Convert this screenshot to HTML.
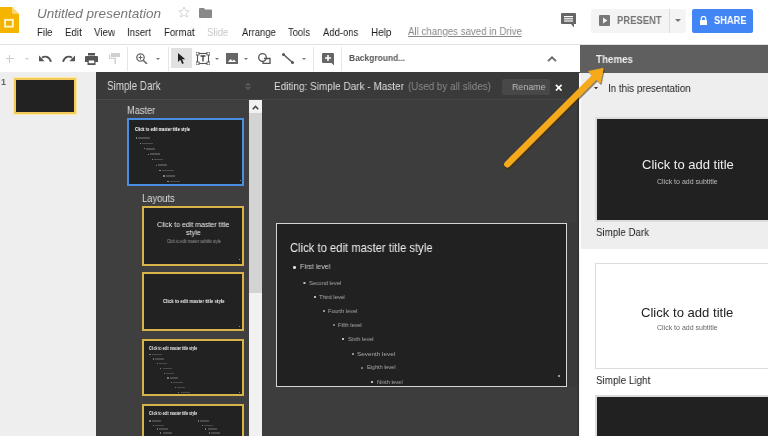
<!DOCTYPE html>
<html><head><meta charset="utf-8">
<style>
*{margin:0;padding:0;box-sizing:border-box}
html,body{width:768px;height:436px;overflow:hidden;background:#fff;font-family:"Liberation Sans",sans-serif;position:relative}
.a{position:absolute}
.t{position:absolute;white-space:nowrap;line-height:1;transform-origin:0 0;will-change:transform}
</style></head><body>
<!-- header -->
<svg class="a" style="left:0;top:6.9px" width="19" height="26.2" viewBox="0 0 19 26.2">
<path d="M0 0H12L19 6.9V25.2Q19 26.2 18 26.2H0Z" fill="#f4b400"/>
<path d="M12 0L19 6.9H14Q12 6.9 12 4.9Z" fill="#fbd77a"/>
<rect x="5.05" y="12.85" width="7.8" height="6.8" fill="#ecb300" stroke="#fdf3cc" stroke-width="1.9"/>
</svg>
<svg class="a" style="left:178.3px;top:5.8px" width="12" height="12" viewBox="0 0 24 24"><path d="M12 2l2.9 7.1 7.6.6-5.8 5 1.8 7.4L12 18l-6.5 4.1 1.8-7.4-5.8-5 7.6-.6z" fill="none" stroke="#ccc" stroke-width="1.6"/></svg>
<svg class="a" style="left:199px;top:8px" width="13" height="10" viewBox="0 0 13 10"><path d="M0 1Q0 0 1 0H5L6 1.5H12Q13 1.5 13 2.5V9Q13 10 12 10H1Q0 10 0 9Z" fill="#888"/></svg>
<svg class="a" style="left:561px;top:13px" width="15" height="15" viewBox="0 0 15 15"><path d="M0 1Q0 0 1 0H14Q15 0 15 1V11H13V14.5L10 11H1Q0 11 0 10Z" fill="#666"/><rect x="3" y="3" width="9" height="1.2" fill="#fff"/><rect x="3" y="5.2" width="9" height="1.2" fill="#fff"/><rect x="3" y="7.4" width="9" height="1.2" fill="#fff"/></svg>
<div class="a" style="left:591px;top:8.5px;width:95px;height:24px;background:#f4f4f4;border-radius:2px"></div>
<div class="a" style="left:669px;top:8.5px;width:1px;height:24px;background:#dcdcdc"></div>
<svg class="a" style="left:599px;top:15px" width="11" height="11" viewBox="0 0 11 11"><rect width="11" height="11" rx="1" fill="#777"/><path d="M4 2.5L8.5 5.5L4 8.5Z" fill="#f1f1f1"/></svg>
<svg class="a" style="left:675px;top:19px" width="6" height="3" viewBox="0 0 6 3"><path d="M0 0H6L3 3Z" fill="#777"/></svg>
<div class="a" style="left:692px;top:8.5px;width:61px;height:24px;background:#4285f4;border-radius:2px"></div>
<svg class="a" style="left:700px;top:16px" width="7" height="9" viewBox="0 0 7 9"><path d="M1.3 4V2.6A2.2 2.2 0 0 1 5.7 2.6V4" fill="none" stroke="#fff" stroke-width="1.2"/><rect x="0" y="4" width="7" height="5" rx=".5" fill="#fff"/></svg>
<div class="a" style="left:0;top:44px;width:768px;height:1px;background:#e2e2e2"></div>
<!-- toolbar -->
<div class="a" style="left:5.5px;top:57.8px;width:8px;height:1.2px;background:#ccc"></div>
<div class="a" style="left:9px;top:54.5px;width:1.2px;height:8px;background:#ccc"></div>
<svg class="a" style="left:24.5px;top:57.5px" width="4" height="2" viewBox="0 0 4 2"><path d="M0 0H4L2 2Z" fill="#ccc"/></svg>
<svg class="a" style="left:38.8px;top:54.8px" width="13" height="7.5" viewBox="0 0 13 7.5"><path d="M3 2.6C6 .8 10.2 1.2 12 6.8" fill="none" stroke="#555" stroke-width="1.9"/><path d="M0 .6V6.2H5.6Z" fill="#555"/></svg>
<svg class="a" style="left:62px;top:54.8px" width="13" height="7.5" viewBox="0 0 13 7.5"><path d="M10 2.6C7 .8 2.8 1.2 1 6.8" fill="none" stroke="#555" stroke-width="1.9"/><path d="M13 .6V6.2H7.4Z" fill="#555"/></svg>
<svg class="a" style="left:84.5px;top:52.5px" width="13" height="12" viewBox="0 0 13 12"><rect x="3" y="0" width="7" height="2.5" fill="#555"/><path d="M0 4Q0 3 1 3H12Q13 3 13 4V9H10.5V12H2.5V9H0Z" fill="#555"/><rect x="3.8" y="7.5" width="5.4" height="2.7" fill="#fff"/></svg>
<svg class="a" style="left:108.5px;top:53px" width="11" height="11" viewBox="0 0 11 11"><rect x="2" y="0" width="9" height="4" fill="#d0d0d0"/><path d="M0 1.5V6H5.5V11H7V4.8H1.2V1.5Z" fill="#d0d0d0"/></svg>
<div class="a" style="left:127px;top:47px;width:1px;height:24px;background:#e6e6e6"></div>
<svg class="a" style="left:136px;top:53px" width="12" height="11" viewBox="0 0 12 11"><circle cx="4.5" cy="4.5" r="3.7" fill="none" stroke="#666" stroke-width="1.3"/><path d="M7.2 7.2L11 11" stroke="#666" stroke-width="1.6"/><path d="M2.6 4.5H6.4M4.5 2.6V6.4" stroke="#666" stroke-width="1.1"/></svg>
<svg class="a" style="left:156px;top:58px" width="4" height="2" viewBox="0 0 4 2"><path d="M0 0H4L2 2Z" fill="#777"/></svg>
<div class="a" style="left:167.5px;top:47px;width:1px;height:24px;background:#e6e6e6"></div>
<div class="a" style="left:170.5px;top:47.7px;width:21.5px;height:20.8px;background:#e1e1e1"></div>
<svg class="a" style="left:178px;top:53px" width="8" height="11" viewBox="0 0 8 11"><path d="M0 0V9L2.3 6.8L4.2 11L5.8 10.3L4 6.3H7.3Z" fill="#222"/></svg>
<svg class="a" style="left:195.5px;top:51.5px" width="14" height="13" viewBox="0 0 14 13"><rect x="1.5" y="1.5" width="11" height="10" fill="none" stroke="#555" stroke-width="1.1"/><rect x="0" y="0" width="3" height="3" fill="#fff" stroke="#555" stroke-width=".9"/><rect x="11" y="0" width="3" height="3" fill="#fff" stroke="#555" stroke-width=".9"/><rect x="0" y="10" width="3" height="3" fill="#fff" stroke="#555" stroke-width=".9"/><rect x="11" y="10" width="3" height="3" fill="#fff" stroke="#555" stroke-width=".9"/><path d="M4.5 4H9.5M7 4V9.5" stroke="#444" stroke-width="1.4"/></svg>
<svg class="a" style="left:214.5px;top:58px" width="4" height="2" viewBox="0 0 4 2"><path d="M0 0H4L2 2Z" fill="#777"/></svg>
<svg class="a" style="left:226px;top:52.5px" width="12" height="11.5" viewBox="0 0 12 11.5"><rect width="12" height="11.5" fill="#666"/><path d="M2 9L4.5 6L6.5 8L8 6.5L10 9Z" fill="#fff"/></svg>
<svg class="a" style="left:243.5px;top:58px" width="4" height="2" viewBox="0 0 4 2"><path d="M0 0H4L2 2Z" fill="#777"/></svg>
<svg class="a" style="left:257.5px;top:53px" width="13" height="11" viewBox="0 0 13 11"><circle cx="4.5" cy="4.5" r="3.8" fill="#fff" stroke="#555" stroke-width="1.3"/><path d="M6 5.5H12V10.5H5V8" fill="none" stroke="#555" stroke-width="1.3"/></svg>
<svg class="a" style="left:282px;top:53px" width="12" height="11" viewBox="0 0 12 11"><path d="M1.5 1.5L10.5 9.5" stroke="#555" stroke-width="1.5"/><circle cx="1.5" cy="1.5" r="1.5" fill="#555"/><circle cx="10.5" cy="9.5" r="1.5" fill="#555"/></svg>
<svg class="a" style="left:302px;top:58px" width="4" height="2" viewBox="0 0 4 2"><path d="M0 0H4L2 2Z" fill="#777"/></svg>
<div class="a" style="left:312.5px;top:47px;width:1px;height:24px;background:#e6e6e6"></div>
<svg class="a" style="left:321.5px;top:52.5px" width="12" height="12.5" viewBox="0 0 12 12.5"><path d="M0 1Q0 0 1 0H11Q12 0 12 1V12.5L9.5 10H1Q0 10 0 9Z" fill="#666"/><path d="M3 5H9M6 2V8" stroke="#fff" stroke-width="1.6"/></svg>
<div class="a" style="left:341px;top:47px;width:1px;height:24px;background:#e6e6e6"></div>
<svg class="a" style="left:547px;top:55.5px" width="10" height="6" viewBox="0 0 10 6"><path d="M1 5.2L5 1.3L9 5.2" fill="none" stroke="#666" stroke-width="1.7"/></svg>
<!-- filmstrip -->
<div class="a" style="left:0;top:72px;width:96px;height:364px;background:#eeeeee"></div>
<div class="a" style="left:14px;top:77.8px;width:62.3px;height:36.7px;background:#222;border:2.4px solid #f2ca55;box-shadow:0 0 0.8px 0.8px #fbe9b0"></div>
<!-- master panel -->
<div class="a" style="left:96px;top:72px;width:166px;height:364px;background:#3f3f3f"></div>
<div class="a" style="left:96px;top:72px;width:166px;height:27px;background:#3a3a3a"></div>
<div class="a" style="left:96px;top:98.5px;width:166px;height:1px;background:#4a4a4a"></div>
<svg class="a" style="left:243.5px;top:82px" width="8" height="8.5" viewBox="0 0 8 8.5"><path d="M.5 3.6L4 .2L7.5 3.6ZM.5 4.9L4 8.3L7.5 4.9Z" fill="#575757"/></svg>
<div class="a" style="left:249px;top:100px;width:13px;height:336px;background:#f1f1f1"></div>
<div class="a" style="left:249px;top:113px;width:13px;height:180px;background:#d3d3d3"></div>
<svg class="a" style="left:252px;top:104.5px" width="7" height="5" viewBox="0 0 7 5"><path d="M.8 4.2L3.5 1.3L6.2 4.2" fill="none" stroke="#444" stroke-width="1.6"/></svg>
<div class="a" style="left:261.5px;top:72px;width:1px;height:364px;background:#363636"></div>
<!-- editing -->
<div class="a" style="left:262px;top:72px;width:318px;height:364px;background:#3d3d3d"></div>
<div class="a" style="left:262px;top:72px;width:318px;height:26.5px;background:#3a3a3a"></div>
<div class="a" style="left:262px;top:98.5px;width:318px;height:1px;background:#474747"></div>
<div class="a" style="left:567px;top:223px;width:12px;height:164px;background:#3a3a3a"></div>
<div class="a" style="left:577px;top:99px;width:2px;height:337px;background:linear-gradient(90deg,#3a3a3a,#2e2e2e)"></div>
<div class="a" style="left:502px;top:79.2px;width:47.6px;height:15.5px;background:#484848;border-radius:2px"></div>
<svg class="a" style="left:555px;top:83.5px" width="7.5" height="7.5" viewBox="0 0 8 8"><path d="M1 1L7 7M7 1L1 7" stroke="#fff" stroke-width="1.8"/></svg>
<div class="a" style="left:275.5px;top:222.5px;width:291.5px;height:164.5px;background:#212121;border:1px solid #d5d5d5"></div>
<!-- themes -->
<div class="a" style="left:580px;top:45px;width:188px;height:27.5px;background:#5f5f5f"></div>
<div class="a" style="left:579px;top:72.5px;width:189px;height:363.5px;background:#fafafa"></div>
<div class="a" style="left:581px;top:72.5px;width:187px;height:176.3px;background:#eeeeee"></div>
<div class="a" style="left:581px;top:248.8px;width:187px;height:187.2px;background:#fff"></div>
<svg class="a" style="left:594px;top:86.5px" width="4" height="2.5" viewBox="0 0 4 2.5"><path d="M0 0H4L2 2.5Z" fill="#333"/></svg>
<div class="a" style="left:594.6px;top:117px;width:190px;height:104.7px;background:#212121;border:2px solid #dcdcdc"></div>
<div class="a" style="left:594.7px;top:263.4px;width:190px;height:105.6px;background:#fff;border:1.5px solid #dcdcdc"></div>
<div class="a" style="left:594.7px;top:394.5px;width:190px;height:60px;background:#212121;border:2px solid #dcdcdc"></div>
<div class="a" style="left:293.3px;top:266.0px;width:2.6px;height:2.6px;border-radius:50%;background:#ddd"></div>
<div class="a" style="left:303.4px;top:281.7px;width:2.2px;height:2.2px;border-radius:50%;border:0.6px solid #bbb"></div>
<div class="a" style="left:313.8px;top:295.9px;width:2.2px;height:2.2px;background:#bbb"></div>
<div class="a" style="left:323.2px;top:310.2px;width:2.2px;height:2.2px;border-radius:50%;background:#bbb"></div>
<div class="a" style="left:332.8px;top:323.9px;width:2.2px;height:2.2px;border-radius:50%;border:0.6px solid #bbb"></div>
<div class="a" style="left:342.2px;top:338.1px;width:2.2px;height:2.2px;background:#bbb"></div>
<div class="a" style="left:351.7px;top:352.8px;width:2.2px;height:2.2px;border-radius:50%;background:#bbb"></div>
<div class="a" style="left:361.2px;top:366.6px;width:2.2px;height:2.2px;border-radius:50%;border:0.6px solid #bbb"></div>
<div class="a" style="left:370.8px;top:380.8px;width:2.2px;height:2.2px;background:#bbb"></div>
<div class="a" style="left:557.5px;top:374.5px;width:2px;height:2px;background:#999"></div>
<div class="a" style="left:127.3px;top:118.3px;width:116.7px;height:67.3px;background:#222;border:2.2px solid #4a8fdf"></div>
<div class="a" style="left:135.7px;top:137.2px;width:1.4px;height:1.4px;background:#888"></div>
<div class="a" style="left:138.4px;top:137.1px;width:12px;height:1.6px;background:#4e4e4e"></div>
<div class="a" style="left:139.7px;top:142.7px;width:1.4px;height:1.4px;background:#888"></div>
<div class="a" style="left:142.3px;top:142.5px;width:11px;height:1.6px;background:#4e4e4e"></div>
<div class="a" style="left:143.6px;top:148.1px;width:1.4px;height:1.4px;background:#888"></div>
<div class="a" style="left:146.3px;top:148.0px;width:9px;height:1.6px;background:#4e4e4e"></div>
<div class="a" style="left:147.6px;top:153.6px;width:1.4px;height:1.4px;background:#888"></div>
<div class="a" style="left:150.2px;top:153.4px;width:10px;height:1.6px;background:#4e4e4e"></div>
<div class="a" style="left:151.5px;top:159.0px;width:1.4px;height:1.4px;background:#888"></div>
<div class="a" style="left:154.2px;top:158.9px;width:9px;height:1.6px;background:#4e4e4e"></div>
<div class="a" style="left:155.5px;top:164.5px;width:1.4px;height:1.4px;background:#888"></div>
<div class="a" style="left:158.2px;top:164.3px;width:9px;height:1.6px;background:#4e4e4e"></div>
<div class="a" style="left:159.4px;top:169.9px;width:1.4px;height:1.4px;background:#888"></div>
<div class="a" style="left:162.1px;top:169.8px;width:12px;height:1.6px;background:#4e4e4e"></div>
<div class="a" style="left:163.4px;top:175.4px;width:1.4px;height:1.4px;background:#888"></div>
<div class="a" style="left:166.1px;top:175.2px;width:9px;height:1.6px;background:#4e4e4e"></div>
<div class="a" style="left:167.3px;top:180.8px;width:1.4px;height:1.4px;background:#888"></div>
<div class="a" style="left:170.0px;top:180.7px;width:10px;height:1.6px;background:#4e4e4e"></div>
<div class="a" style="left:240px;top:180px;width:1px;height:1px;background:#888"></div>
<div class="a" style="left:142.2px;top:205.8px;width:101.8px;height:59.8px;background:#222;border:2.6px solid #d8b34a"></div>
<div class="a" style="left:239px;top:259.3px;width:1px;height:1px;background:#888"></div>
<div class="a" style="left:142.2px;top:272px;width:101.8px;height:58.9px;background:#222;border:2.6px solid #d8b34a"></div>
<div class="a" style="left:239px;top:325.5px;width:1px;height:1px;background:#888"></div>
<div class="a" style="left:142.2px;top:338.5px;width:101.8px;height:57.7px;background:#222;border:2.6px solid #d8b34a"></div>
<div class="a" style="left:239px;top:392.0px;width:1px;height:1px;background:#888"></div>
<div class="a" style="left:142.2px;top:404px;width:101.8px;height:60px;background:#222;border:2.6px solid #d8b34a"></div>
<div class="a" style="left:239px;top:457.5px;width:1px;height:1px;background:#888"></div>
<div class="a" style="left:149.4px;top:353.7px;width:1.2px;height:1.2px;background:#777"></div>
<div class="a" style="left:151.8px;top:353.6px;width:10px;height:1.4px;background:#4a4a4a"></div>
<div class="a" style="left:153.0px;top:358.4px;width:1.2px;height:1.2px;background:#777"></div>
<div class="a" style="left:155.4px;top:358.4px;width:9px;height:1.4px;background:#4a4a4a"></div>
<div class="a" style="left:156.6px;top:363.2px;width:1.2px;height:1.2px;background:#777"></div>
<div class="a" style="left:159.0px;top:363.1px;width:8px;height:1.4px;background:#4a4a4a"></div>
<div class="a" style="left:160.2px;top:367.9px;width:1.2px;height:1.2px;background:#777"></div>
<div class="a" style="left:162.6px;top:367.9px;width:9px;height:1.4px;background:#4a4a4a"></div>
<div class="a" style="left:163.8px;top:372.7px;width:1.2px;height:1.2px;background:#777"></div>
<div class="a" style="left:166.2px;top:372.6px;width:8px;height:1.4px;background:#4a4a4a"></div>
<div class="a" style="left:167.4px;top:377.4px;width:1.2px;height:1.2px;background:#777"></div>
<div class="a" style="left:169.8px;top:377.4px;width:8px;height:1.4px;background:#4a4a4a"></div>
<div class="a" style="left:171.0px;top:382.2px;width:1.2px;height:1.2px;background:#777"></div>
<div class="a" style="left:173.4px;top:382.1px;width:10px;height:1.4px;background:#4a4a4a"></div>
<div class="a" style="left:174.6px;top:386.9px;width:1.2px;height:1.2px;background:#777"></div>
<div class="a" style="left:177.0px;top:386.9px;width:8px;height:1.4px;background:#4a4a4a"></div>
<div class="a" style="left:178.2px;top:391.7px;width:1.2px;height:1.2px;background:#777"></div>
<div class="a" style="left:180.6px;top:391.6px;width:9px;height:1.4px;background:#4a4a4a"></div>
<div class="a" style="left:149.4px;top:420.4px;width:1.2px;height:1.2px;background:#777"></div>
<div class="a" style="left:151.8px;top:420.3px;width:9px;height:1.4px;background:#4a4a4a"></div>
<div class="a" style="left:153.0px;top:424.9px;width:1.2px;height:1.2px;background:#777"></div>
<div class="a" style="left:155.4px;top:424.8px;width:9px;height:1.4px;background:#4a4a4a"></div>
<div class="a" style="left:156.6px;top:428.4px;width:1.2px;height:1.2px;background:#777"></div>
<div class="a" style="left:159.0px;top:428.3px;width:9px;height:1.4px;background:#4a4a4a"></div>
<div class="a" style="left:160.2px;top:432.4px;width:1.2px;height:1.2px;background:#777"></div>
<div class="a" style="left:162.6px;top:432.3px;width:9px;height:1.4px;background:#4a4a4a"></div>
<div class="a" style="left:198.0px;top:420.4px;width:1.2px;height:1.2px;background:#777"></div>
<div class="a" style="left:200.4px;top:420.3px;width:9px;height:1.4px;background:#4a4a4a"></div>
<div class="a" style="left:201.6px;top:424.9px;width:1.2px;height:1.2px;background:#777"></div>
<div class="a" style="left:204.0px;top:424.8px;width:9px;height:1.4px;background:#4a4a4a"></div>
<div class="a" style="left:205.2px;top:428.4px;width:1.2px;height:1.2px;background:#777"></div>
<div class="a" style="left:207.6px;top:428.3px;width:9px;height:1.4px;background:#4a4a4a"></div>
<div class="a" style="left:208.8px;top:432.4px;width:1.2px;height:1.2px;background:#777"></div>
<div class="a" style="left:211.2px;top:432.3px;width:9px;height:1.4px;background:#4a4a4a"></div><div class="t" style="left:37.3px;top:6.70px;font-size:13px;color:#777;font-style:italic;transform:scaleX(1.040);">Untitled presentation</div>
<div class="t" style="left:36.5px;top:26.69px;font-size:11px;color:#222;;transform:scaleX(0.874);">File</div>
<div class="t" style="left:64.6px;top:26.69px;font-size:11px;color:#222;;transform:scaleX(0.880);">Edit</div>
<div class="t" style="left:94.3px;top:26.69px;font-size:11px;color:#222;;transform:scaleX(0.892);">View</div>
<div class="t" style="left:127.1px;top:26.69px;font-size:11px;color:#222;;transform:scaleX(0.872);">Insert</div>
<div class="t" style="left:164.0px;top:26.69px;font-size:11px;color:#222;;transform:scaleX(0.878);">Format</div>
<div class="t" style="left:207.3px;top:26.69px;font-size:11px;color:#c8c8c8;;transform:scaleX(0.870);">Slide</div>
<div class="t" style="left:241.7px;top:26.69px;font-size:11px;color:#222;;transform:scaleX(0.864);">Arrange</div>
<div class="t" style="left:288.0px;top:26.69px;font-size:11px;color:#222;;transform:scaleX(0.856);">Tools</div>
<div class="t" style="left:323.0px;top:26.69px;font-size:11px;color:#222;;transform:scaleX(0.861);">Add-ons</div>
<div class="t" style="left:371.0px;top:26.69px;font-size:11px;color:#222;;transform:scaleX(0.902);">Help</div>
<div class="t" style="left:407.8px;top:26.19px;font-size:11px;color:#888;text-decoration:underline;transform:scaleX(0.879);">All changes saved in Drive</div>
<div class="t" style="left:616.7px;top:15.19px;font-size:11px;color:#757575;font-weight:bold;transform:scaleX(0.858);">PRESENT</div>
<div class="t" style="left:714.0px;top:15.19px;font-size:11px;color:#fff;font-weight:bold;transform:scaleX(0.844);">SHARE</div>
<div class="t" style="left:348.9px;top:53.90px;font-size:8.5px;color:#555;font-weight:bold;transform:scaleX(0.991);">Background...</div>
<div class="t" style="left:595.8px;top:54.11px;font-size:10.5px;color:#eee;font-weight:bold;transform:scaleX(0.932);">Themes</div>
<div class="t" style="left:607.5px;top:82.69px;font-size:11px;color:#222;;transform:scaleX(0.890);">In this presentation</div>
<div class="t" style="left:107.3px;top:79.89px;font-size:12.3px;color:#ddd;;transform:scaleX(0.800);">Simple Dark</div>
<div class="t" style="left:127.2px;top:105.21px;font-size:10.5px;color:#ddd;;transform:scaleX(0.882);">Master</div>
<div class="t" style="left:142.4px;top:193.11px;font-size:10.5px;color:#ddd;;transform:scaleX(0.889);">Layouts</div>
<div class="t" style="left:273.9px;top:81.27px;font-size:11.5px;color:#ddd;;transform:scaleX(0.869);">Editing: Simple Dark - Master</div>
<div class="t" style="left:407.7px;top:81.27px;font-size:11.5px;color:#8a8a8a;;transform:scaleX(0.854);">(Used by all slides)</div>
<div class="t" style="left:511.5px;top:82.46px;font-size:9.5px;color:#bbb;;transform:scaleX(0.933);">Rename</div>
<div class="t" style="left:1.2px;top:78.08px;font-size:9px;color:#666;font-weight:bold;">1</div>
<div class="t" style="left:289.6px;top:241.87px;font-size:12.2px;color:#eee;;transform:scaleX(0.923);">Click to edit master title style</div>
<div class="t" style="left:299.9px;top:263.40px;font-size:7.4px;color:#ccc;;transform:scaleX(0.958);">First level</div>
<div class="t" style="left:309.0px;top:279.58px;font-size:6px;color:#aaa;;transform:scaleX(0.937);">Second level</div>
<div class="t" style="left:318.7px;top:293.78px;font-size:6px;color:#aaa;;transform:scaleX(0.943);">Third level</div>
<div class="t" style="left:328.3px;top:308.08px;font-size:6px;color:#aaa;;transform:scaleX(0.938);">Fourth level</div>
<div class="t" style="left:338.0px;top:321.78px;font-size:6px;color:#aaa;;transform:scaleX(0.927);">Fifth level</div>
<div class="t" style="left:347.6px;top:335.98px;font-size:6px;color:#aaa;;transform:scaleX(0.936);">Sixth level</div>
<div class="t" style="left:357.2px;top:350.68px;font-size:6px;color:#aaa;;transform:scaleX(1.057);">Seventh level</div>
<div class="t" style="left:366.8px;top:364.48px;font-size:6px;color:#aaa;;transform:scaleX(0.918);">Eighth level</div>
<div class="t" style="left:376.5px;top:378.68px;font-size:6px;color:#aaa;;transform:scaleX(0.914);">Ninth level</div>
<div class="t" style="left:641.8px;top:158.40px;font-size:13px;color:#eee;;">Click to add title</div>
<div class="t" style="left:656.9px;top:177.57px;font-size:7px;color:#bbb;;">Click to add subtitle</div>
<div class="t" style="left:596.2px;top:227.49px;font-size:11px;color:#222;;transform:scaleX(0.885);">Simple Dark</div>
<div class="t" style="left:641.0px;top:305.50px;font-size:13px;color:#222;;transform:scaleX(1.007);">Click to add title</div>
<div class="t" style="left:656.9px;top:324.37px;font-size:7px;color:#666;;">Click to add subtitle</div>
<div class="t" style="left:595.7px;top:374.69px;font-size:11px;color:#222;;transform:scaleX(0.897);">Simple Light</div>
<div class="t" style="left:135.0px;top:127.54px;font-size:4.8px;color:#fff;font-weight:bold;transform:scaleX(0.828);">Click to edit master title style</div>
<div class="t" style="left:157.3px;top:221.45px;font-size:7.5px;color:#eee;;transform:scaleX(0.935);">Click to edit master title</div>
<div class="t" style="left:186.2px;top:229.15px;font-size:7.5px;color:#eee;;transform:scaleX(0.953);">style</div>
<div class="t" style="left:166.9px;top:239.99px;font-size:4.5px;color:#999;;transform:scaleX(0.837);">Click to edit master subtitle style</div>
<div class="t" style="left:162.8px;top:298.86px;font-size:5.6px;color:#eee;font-weight:bold;transform:scaleX(0.795);">Click to edit master title style</div>
<div class="t" style="left:149.0px;top:345.77px;font-size:5px;color:#eee;font-weight:bold;transform:scaleX(0.694);">Click to edit master title style</div>
<div class="t" style="left:149.0px;top:411.37px;font-size:5px;color:#eee;font-weight:bold;transform:scaleX(0.694);">Click to edit master title style</div>
<svg class="a" style="left:0;top:0" width="768" height="436" viewBox="0 0 768 436">
<g transform="translate(0.8,0.9)" opacity="0.55">
<path d="M507.4 164.2L594.4 77.2" stroke="#4a3000" stroke-width="8" stroke-linecap="round"/>
<path d="M603.2 68.4L588.6 71.4L600.2 83Z" fill="#4a3000" stroke="#4a3000" stroke-width="1.6" stroke-linejoin="round"/>
</g>
<path d="M507.4 164.2L594.4 77.2" stroke="#f6a91a" stroke-width="6.5" stroke-linecap="round"/>
<path d="M603.2 68.4L588.6 71.4L600.2 83Z" fill="#f6a91a" stroke="#f6a91a" stroke-width="1" stroke-linejoin="round"/>
</svg>
</body></html>
